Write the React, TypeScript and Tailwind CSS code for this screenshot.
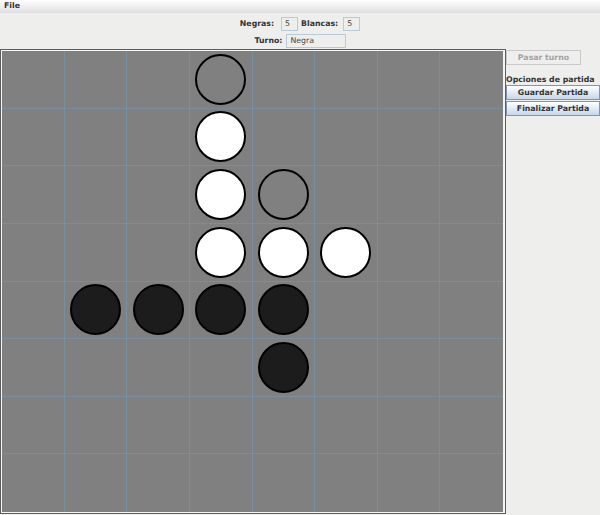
import React from 'react';

// tablero: W = blanca, B = negra, O = jugada posible
type Cell = 'W' | 'B' | 'O' | null;

const board: Cell[][] = [
  [null, null, null, 'O', null, null, null, null],
  [null, null, null, 'W', null, null, null, null],
  [null, null, null, 'W', 'O', null, null, null],
  [null, null, null, 'W', 'W', 'W', null, null],
  [null, 'B', 'B', 'B', 'B', null, null, null],
  [null, null, null, null, 'B', null, null, null],
  [null, null, null, null, null, null, null, null],
  [null, null, null, null, null, null, null, null],
];

const font = { fontFamily: '"DejaVu Sans", "Liberation Sans", sans-serif' };

function Piece({ kind }: { kind: Cell }) {
  if (!kind) return null;
  if (kind === 'W') return <div className="w-[51px] h-[51px] rounded-full border-2 border-black bg-white" />;
  if (kind === 'B') return <div className="w-[51px] h-[51px] rounded-full border-2 border-black bg-[#1c1c1c]" />;
  return <div className="w-[51px] h-[51px] rounded-full border-2 border-black" />;
}

function Field({ value, w }: { value: string; w: string }) {
  return (
    <div className={`${w} h-[14px] border border-[#b9cadb] bg-[#eeeeec] px-[3px] text-[7.8px] font-normal leading-[12px] text-[#444]`}>
      {value}
    </div>
  );
}

export default function App() {
  return (
    <div className="w-[600px] h-[515px] bg-[#eeeeec] text-[#333] overflow-hidden" style={font}>
      {/* barra de menú */}
      <div className="h-[13px] bg-gradient-to-b from-white to-[#dedede] px-[4px] text-[7.8px] font-bold leading-[12px]">
        File
      </div>

      {/* marcador */}
      <div className="flex justify-center items-center h-[21px] pt-[1px] text-[7.8px] font-bold">
        <span className="mr-[7px]">Negras:</span>
        <Field value="5" w="w-[17px]" />
        <span className="ml-[3px] mr-[5px]">Blancas:</span>
        <Field value="5" w="w-[17px]" />
      </div>
      <div className="flex justify-center items-center h-[14px] pl-[1px] text-[7.8px] font-bold">
        <span className="mr-[4px]">Turno:</span>
        <Field value="Negra" w="w-[60px]" />
      </div>

      <div className="flex mt-[1px]">
        {/* tablero */}
        <div className="border border-[#5e5e5e]">
          <div className="border-t border-l border-r-2 border-b border-[#f4f4f4]">
            <div className="grid grid-cols-8 grid-rows-8 w-[501px] h-[461px] bg-[#808080]">
              {board.map((row, r) =>
                row.map((cell, c) => (
                  <div
                    key={`${r}-${c}`}
                    className={`flex items-center justify-center border-[#77909f] ${c < 7 ? 'border-r' : ''} ${r < 7 ? 'border-b' : ''}`}
                  >
                    <Piece kind={cell} />
                  </div>
                ))
              )}
            </div>
          </div>
        </div>

        {/* opciones */}
        <div className="flex flex-col w-[94px] text-[7.8px] font-bold">
          <button className="w-[75px] h-[15px] mt-[1px] border border-[#c9c9c9] bg-[#eeeeec] text-[#a3a3a3] leading-[13px]">
            Pasar turno
          </button>
          <div className="mt-[10px] leading-[10px]">Opciones de partida</div>
          <button className="h-[15px] border border-[#8196ab] bg-gradient-to-b from-white to-[#c5d7e9] text-[#333] leading-[13px]">
            Guardar Partida
          </button>
          <button className="h-[15px] mt-[1px] border border-[#8196ab] bg-gradient-to-b from-white to-[#c5d7e9] text-[#333] leading-[13px]">
            Finalizar Partida
          </button>
        </div>
      </div>
    </div>
  );
}
